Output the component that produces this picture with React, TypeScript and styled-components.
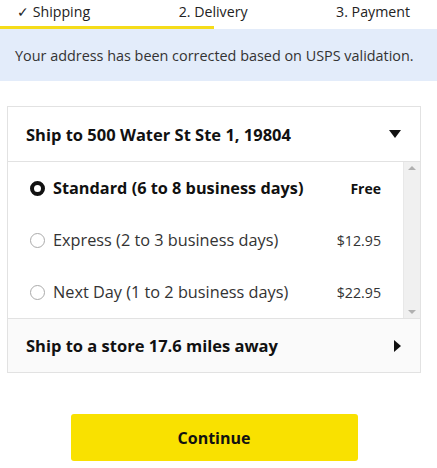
import React from "react";
import styled, { createGlobalStyle } from "styled-components";

const Global = createGlobalStyle`
  html, body { margin: 0; padding: 0; background: #fff; }
  body { font-family: "Open Sans", "Noto Sans", Arial, sans-serif; color: #222; width: 437px; height: 468px; overflow: hidden; }
  * { box-sizing: border-box; }
`;

const Tabs = styled.div`
  display: flex;
  justify-content: space-between;
  padding: 0 27px 0 17px;
  height: 26px;
  align-items: center;
`;

const Tab = styled.div`
  font-size: 14.2px;
  color: #222;
  line-height: 20px;
  margin-top: -3px;
`;

const Track = styled.div`
  height: 3px;
  background: #fff;
`;

const Fill = styled.div`
  height: 100%;
  background: #f5dc1a;
`;

const Banner = styled.div`
  background: #e3ecfa;
  height: 52px;
  display: flex;
  align-items: center;
  padding-left: 15px;
  font-size: 14.4px;
  color: #333;
`;

const Body = styled.div`
  width: 414px;
  margin: 25px 0 0 7px;
  display: flex;
  flex-direction: column;
  align-items: center;
`;

const Card = styled.div`
  width: 100%;
  border: 1px solid #e2e2e2;
  display: flex;
  flex-direction: column;
`;

const SectionRow = styled.div<{ $muted?: boolean }>`
  height: ${(p) => (p.$muted ? 54 : 55)}px;
  display: flex;
  align-items: center;
  justify-content: space-between;
  padding: 0 19px 0 18px;
  background: ${(p) => (p.$muted ? "#fafafa" : "#fff")};
  border-${(p) => (p.$muted ? "top" : "bottom")}: 1px solid #e2e2e2;
  font-size: 16.5px;
  font-weight: 700;
  color: #111;
`;

const Options = styled.div`
  display: flex;
  height: 156px;
`;

const OptionList = styled.div`
  flex: 1;
  display: flex;
  flex-direction: column;
`;

const Option = styled.div<{ $selected?: boolean }>`
  height: 52px;
  display: flex;
  align-items: center;
  padding: 0 22px 0 22px;
  font-size: 16.3px;
  font-weight: ${(p) => (p.$selected ? 700 : 400)};
  color: ${(p) => (p.$selected ? "#111" : "#333")};
`;

const Radio = styled.span<{ $selected?: boolean }>`
  width: 15px;
  height: 15px;
  border-radius: 50%;
  flex: none;
  margin-right: 8px;
  border: ${(p) => (p.$selected ? "4px solid #111" : "1px solid #aaa")};
  background: #fff;
`;

const Label = styled.span`
  flex: 1;
`;

const Price = styled.span<{ $selected?: boolean }>`
  font-size: ${(p) => (p.$selected ? 14 : 14.2)}px;
`;

const Scrollbar = styled.div`
  width: 17px;
  background: #f0f0f0;
  display: flex;
  flex-direction: column;
  align-items: center;
  justify-content: space-between;
  padding: 4px 0;
  border-left: 1px solid #e8e8e8;
`;

const Arrow = styled.span<{ $down?: boolean }>`
  width: 0;
  height: 0;
  border-left: 4px solid transparent;
  border-right: 4px solid transparent;
  ${(p) => (p.$down ? "border-top: 4px solid #b0b0b0;" : "border-bottom: 4px solid #b0b0b0;")}
`;

const Caret = styled.span<{ $right?: boolean }>`
  width: 0;
  height: 0;
  ${(p) =>
    p.$right
      ? "border-top: 6px solid transparent; border-bottom: 6px solid transparent; border-left: 7px solid #111;"
      : "border-left: 6px solid transparent; border-right: 6px solid transparent; border-top: 8px solid #111;"}
`;

const Button = styled.button`
  margin-top: 41px;
  width: 287px;
  height: 47px;
  border: none;
  border-radius: 3px;
  background: #f9e100;
  font-family: inherit;
  font-size: 16px;
  font-weight: 700;
  color: #111;
`;

const options = [
  { label: "Standard (6 to 8 business days)", price: "Free", selected: true },
  { label: "Express (2 to 3 business days)", price: "$12.95" },
  { label: "Next Day (1 to 2 business days)", price: "$22.95" },
];

export default function App() {
  return (
    <>
      <Global />
      <Tabs>
        <Tab>✓ Shipping</Tab>
        <Tab>2. Delivery</Tab>
        <Tab>3. Payment</Tab>
      </Tabs>
      <Track>
        <Fill style={{ width: "49%" }} />
      </Track>
      <Banner>Your address has been corrected based on USPS validation.</Banner>
      <Body>
        <Card>
          <SectionRow>
            <span>Ship to 500 Water St Ste 1, 19804</span>
            <Caret />
          </SectionRow>
          <Options>
            <OptionList>
              {options.map((o) => (
                <Option key={o.label} $selected={o.selected}>
                  <Radio $selected={o.selected} />
                  <Label>{o.label}</Label>
                  <Price $selected={o.selected}>{o.price}</Price>
                </Option>
              ))}
            </OptionList>
            <Scrollbar>
              <Arrow />
              <Arrow $down />
            </Scrollbar>
          </Options>
          <SectionRow $muted>
            <span>Ship to a store 17.6 miles away</span>
            <Caret $right />
          </SectionRow>
        </Card>
        <Button>Continue</Button>
      </Body>
    </>
  );
}
